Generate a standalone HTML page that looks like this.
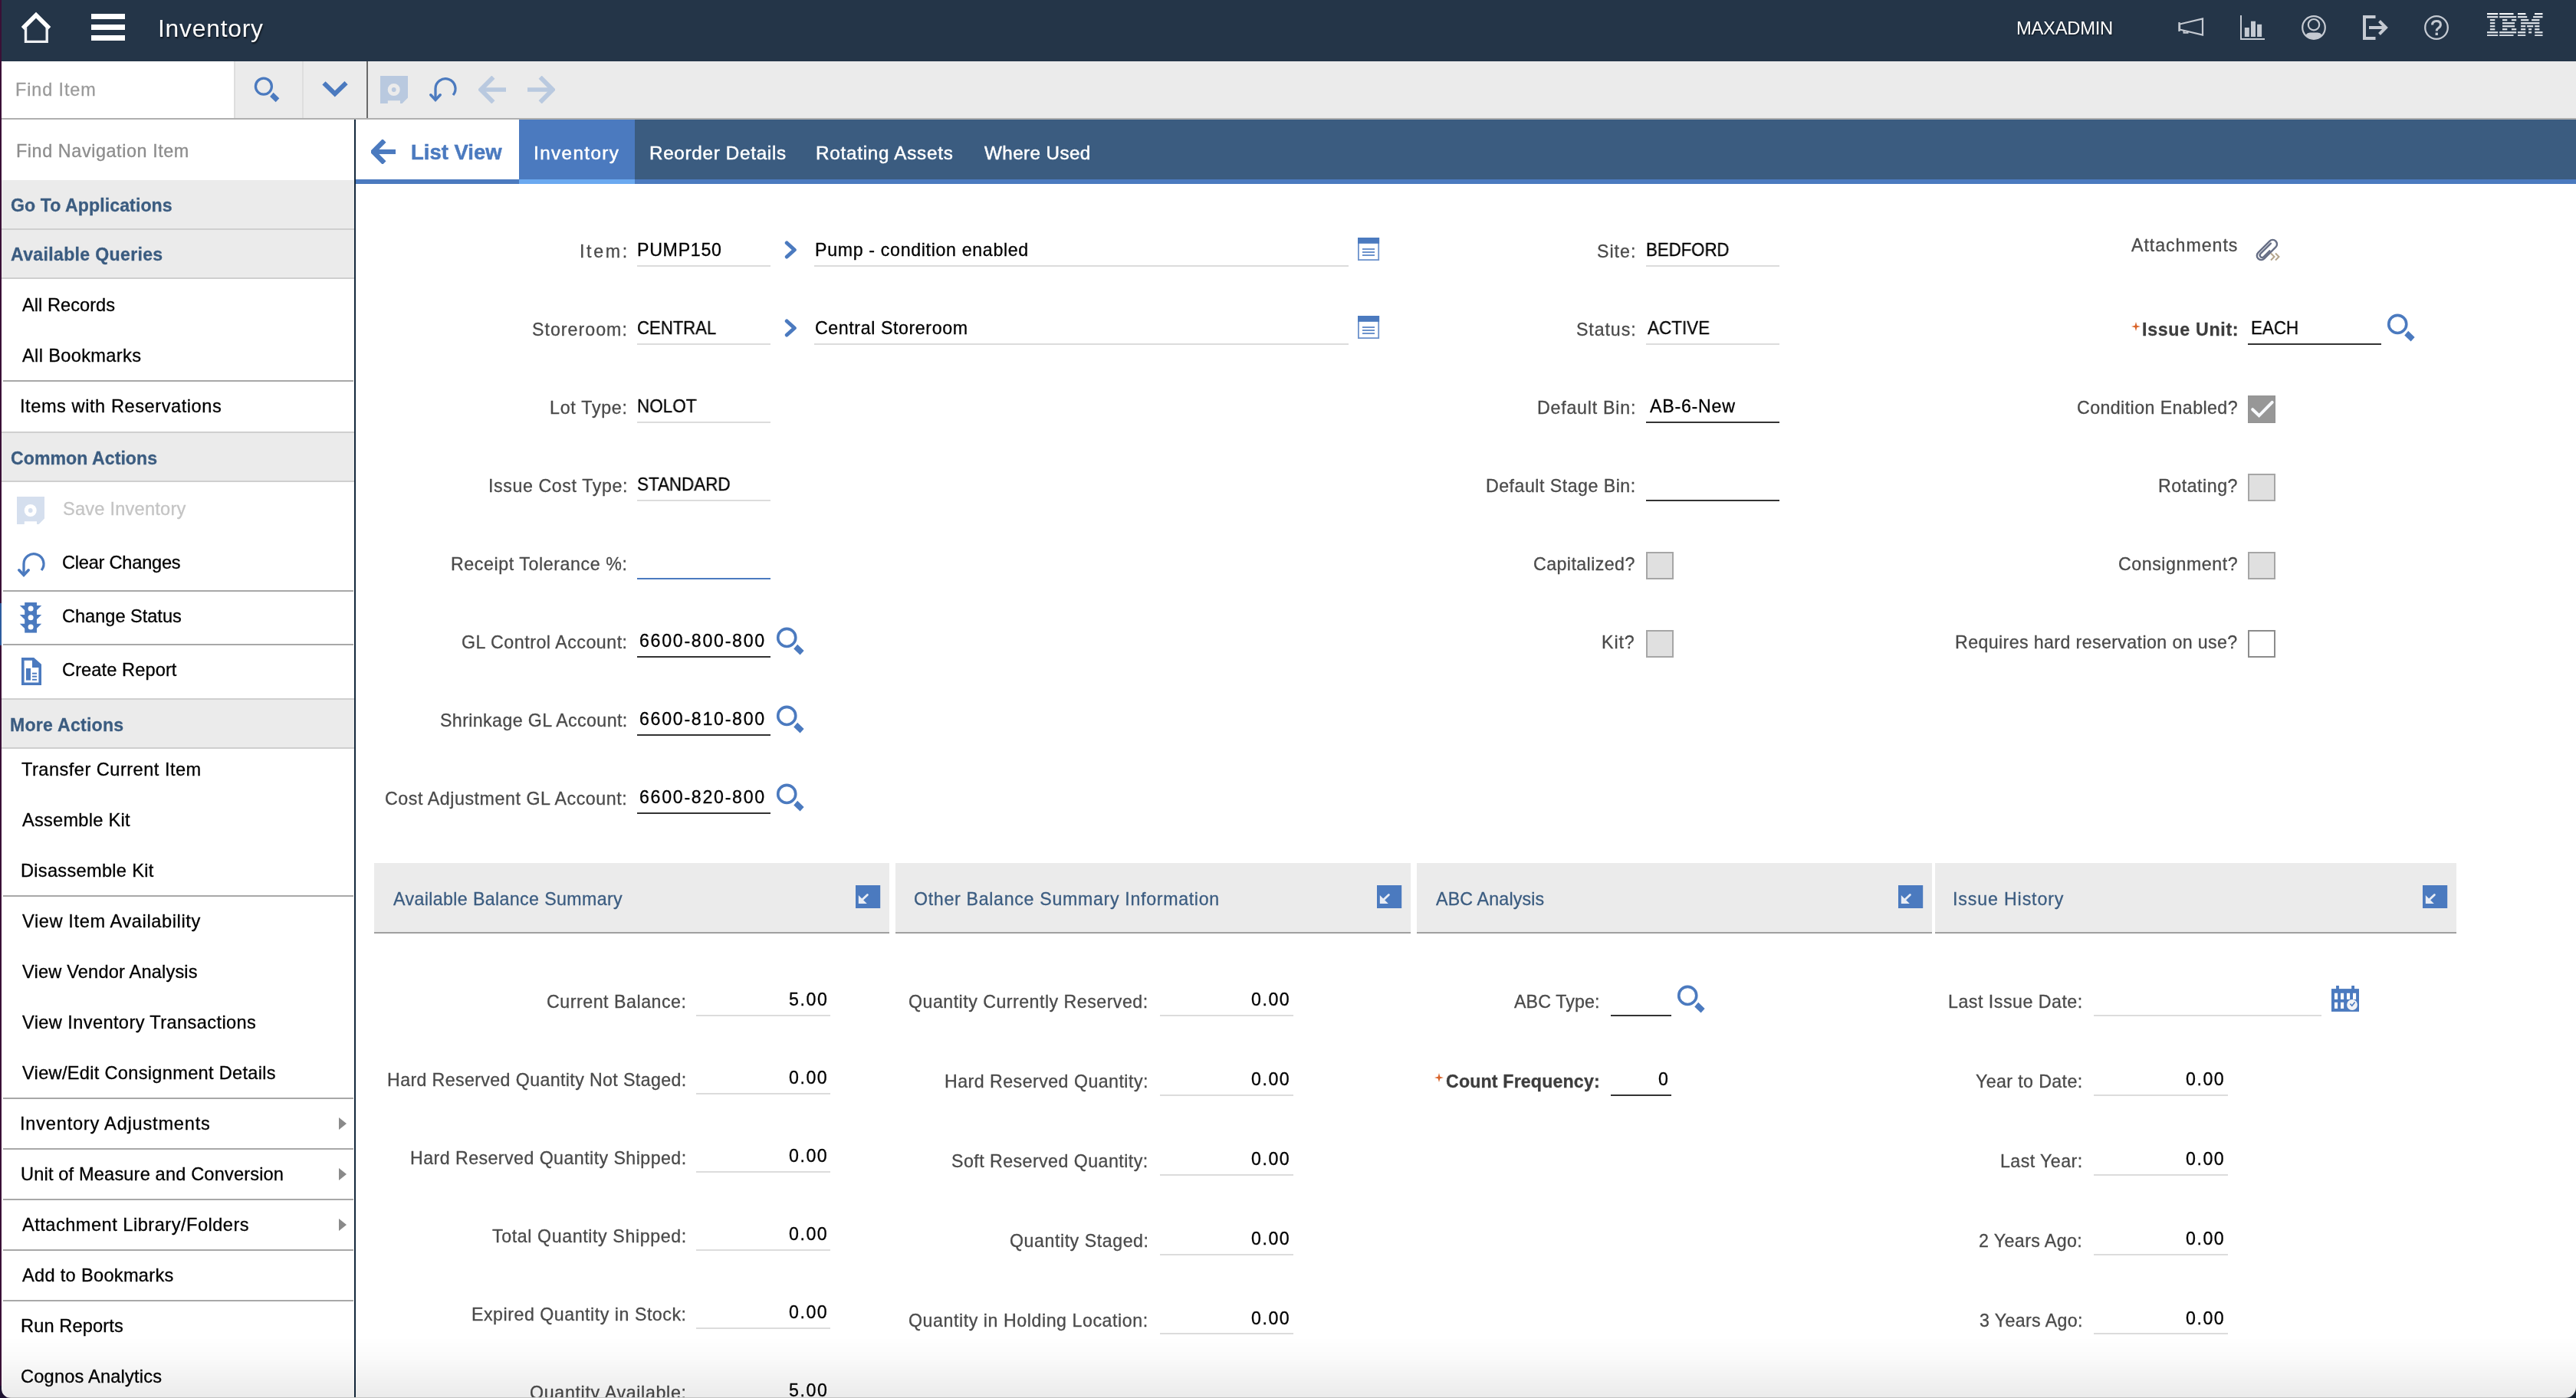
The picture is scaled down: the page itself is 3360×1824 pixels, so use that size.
<!DOCTYPE html>
<html><head><meta charset="utf-8"><title>Inventory</title>
<style>
html,body{margin:0;padding:0;background:#fff;}
body{width:3360px;height:1824px;position:relative;overflow:hidden;font-family:"Liberation Sans",sans-serif;}
#p{position:absolute;left:0;top:0;width:3360px;height:1824px;overflow:hidden;}
#p>div,#p>svg,#p>span{position:absolute;display:block;}
.t{line-height:1;white-space:nowrap;will-change:transform;-webkit-text-stroke-width:.3px;}
</style></head><body><div id="p">
<div style="left:0px;top:0px;width:3360px;height:1824px;background:#fff;"></div>
<div style="left:0px;top:0px;width:2px;height:1824px;background:#3a1036;"></div>
<div style="left:0px;top:787px;width:2px;height:55px;background:#2d5c9e;"></div>
<div style="left:2px;top:0px;width:3358px;height:80px;background:#243548;"></div>
<div style="left:2px;top:80px;width:3358px;height:74px;background:#ebebeb;"></div>
<div style="left:2px;top:154px;width:3358px;height:2px;background:#afafaf;"></div>
<div style="left:2px;top:80px;width:304px;height:74px;background:#fff;"></div>
<div style="left:305px;top:80px;width:2px;height:74px;background:#dedede;"></div>
<div style="left:394px;top:80px;width:2px;height:74px;background:#dedede;"></div>
<div style="left:478px;top:80px;width:2px;height:74px;background:#6a6a6a;"></div>
<svg style="left:28px;top:14px" width="40" height="44" viewBox="0 0 40 44"><path d="M3.66 21 L19 5.76 L34.34 21" fill="none" stroke="#fff" stroke-width="5.6" stroke-linecap="square" stroke-linejoin="miter"/><path d="M5.5 22 V40.4 H33.2 V22" fill="none" stroke="#eef0f3" stroke-width="3.4"/></svg>
<div style="left:119px;top:17.5px;width:44px;height:7px;background:#fff;"></div>
<div style="left:119px;top:31.5px;width:44px;height:7px;background:#fff;"></div>
<div style="left:119px;top:45.5px;width:44px;height:7px;background:#fff;"></div>
<span class="t " style="top:22px;font-size:31.8px;color:#fff;letter-spacing:0.774px;left:206.07px;-webkit-text-stroke-width:0;text-shadow:1px 2px 2px rgba(0,0,0,.6);">Inventory</span>
<span class="t " style="top:25px;font-size:23.8px;color:#fff;letter-spacing:-0.297px;left:2630.05px;-webkit-text-stroke-width:0;text-shadow:1px 1px 2px rgba(0,0,0,.6);">MAXADMIN</span>
<svg style="left:2840px;top:20px" width="36" height="32" viewBox="0 0 36 32"><path d="M33 4.5 V25.5 L3 18.5 V11.5 Z" fill="none" stroke="#c5cad2" stroke-width="2.2" stroke-linejoin="miter"/><path d="M2.5 9 V21" stroke="#c5cad2" stroke-width="2.4"/><path d="M8.5 19.5 V22.8 H13.5 V20.5" fill="none" stroke="#c5cad2" stroke-width="2"/></svg>
<svg style="left:2921px;top:20px" width="34" height="32" viewBox="0 0 34 32"><path d="M2 0 V31 H33" fill="none" stroke="#c5cad2" stroke-width="2"/><rect x="6.8" y="16" width="6" height="12" fill="#c5cad2"/><rect x="15" y="7.7" width="6" height="20.3" fill="#c5cad2"/><rect x="23.1" y="11.8" width="6" height="16.2" fill="#c5cad2"/></svg>
<svg style="left:3001px;top:19px" width="34" height="34" viewBox="0 0 34 34"><circle cx="17" cy="17" r="14.8" fill="none" stroke="#c5cad2" stroke-width="2.2"/><circle cx="17" cy="13.2" r="7.2" fill="none" stroke="#c5cad2" stroke-width="2.2"/><path d="M6.4 26.6 Q8.6 23.6 12 23.6 H22 Q25.4 23.6 27.6 26.6 A14.2 14.2 0 0 1 6.4 26.6 Z" fill="#c5cad2"/></svg>
<svg style="left:3081px;top:20px" width="34" height="32" viewBox="0 0 34 32"><path d="M17.5 2 H3 V30 H17.5" fill="none" stroke="#c5cad2" stroke-width="4"/><path d="M9 16 H30" stroke="#c5cad2" stroke-width="4"/><path d="M22.5 7.5 L31 16 L22.5 24.5" fill="none" stroke="#c5cad2" stroke-width="4" stroke-linejoin="miter"/></svg>
<svg style="left:3161px;top:19px" width="34" height="34" viewBox="0 0 34 34"><circle cx="17" cy="17" r="14.8" fill="none" stroke="#c5cad2" stroke-width="2.3"/><path d="M11.6 13.6 Q11.6 8.6 17 8.6 Q22.4 8.6 22.4 13 Q22.4 15.8 19.6 17.6 Q17.2 19.2 17.2 21.6" fill="none" stroke="#c5cad2" stroke-width="3"/><rect x="15.6" y="23.6" width="3.3" height="3.4" fill="#c5cad2"/></svg>
<svg style="left:3244px;top:17px" width="73" height="30" viewBox="0 0 73 30"><rect x="0" y="0.00" width="14.2" height="2.2" fill="#f4f6f8"/><rect x="16.1" y="0.00" width="18.4" height="2.2" fill="#f4f6f8"/><rect x="40" y="0.00" width="10.4" height="2.2" fill="#f4f6f8"/><rect x="62" y="0.00" width="10.5" height="2.2" fill="#f4f6f8"/><rect x="0" y="4.03" width="14.2" height="2.2" fill="#dfe3e8"/><rect x="16.1" y="4.03" width="22.1" height="2.2" fill="#dfe3e8"/><rect x="40" y="4.03" width="12.2" height="2.2" fill="#dfe3e8"/><rect x="60.1" y="4.03" width="12.4" height="2.2" fill="#dfe3e8"/><rect x="3.9" y="8.06" width="6.4" height="2.2" fill="#dfe3e8"/><rect x="20" y="8.06" width="6.3" height="2.2" fill="#dfe3e8"/><rect x="31.9" y="8.06" width="6.3" height="2.2" fill="#dfe3e8"/><rect x="44.1" y="8.06" width="10.2" height="2.2" fill="#dfe3e8"/><rect x="58.1" y="8.06" width="10.3" height="2.2" fill="#dfe3e8"/><rect x="3.9" y="12.09" width="6.4" height="2.2" fill="#dfe3e8"/><rect x="20" y="12.09" width="16.1" height="2.2" fill="#dfe3e8"/><rect x="44.1" y="12.09" width="24.3" height="2.2" fill="#dfe3e8"/><rect x="3.9" y="16.12" width="6.4" height="2.2" fill="#dfe3e8"/><rect x="20" y="16.12" width="16.1" height="2.2" fill="#dfe3e8"/><rect x="44.1" y="16.12" width="6.1" height="2.2" fill="#dfe3e8"/><rect x="52.1" y="16.12" width="8.1" height="2.2" fill="#dfe3e8"/><rect x="62.2" y="16.12" width="6.2" height="2.2" fill="#dfe3e8"/><rect x="3.9" y="20.15" width="6.4" height="2.2" fill="#dfe3e8"/><rect x="20" y="20.15" width="6.3" height="2.2" fill="#dfe3e8"/><rect x="31.9" y="20.15" width="6.3" height="2.2" fill="#dfe3e8"/><rect x="44.1" y="20.15" width="6.1" height="2.2" fill="#dfe3e8"/><rect x="54.1" y="20.15" width="4.0" height="2.2" fill="#dfe3e8"/><rect x="62.2" y="20.15" width="6.2" height="2.2" fill="#dfe3e8"/><rect x="0" y="24.18" width="14.2" height="2.2" fill="#dfe3e8"/><rect x="16.1" y="24.18" width="22.1" height="2.2" fill="#dfe3e8"/><rect x="40" y="24.18" width="10.2" height="2.2" fill="#dfe3e8"/><rect x="54.1" y="24.18" width="4.0" height="2.2" fill="#dfe3e8"/><rect x="62.2" y="24.18" width="10.3" height="2.2" fill="#dfe3e8"/><rect x="0" y="28.21" width="14.2" height="2.2" fill="#dfe3e8"/><rect x="16.1" y="28.21" width="18.4" height="2.2" fill="#dfe3e8"/><rect x="40" y="28.21" width="10.2" height="2.2" fill="#dfe3e8"/><rect x="62.2" y="28.21" width="10.3" height="2.2" fill="#dfe3e8"/></svg>
<span class="t " style="top:106px;font-size:23.4px;color:#9a9a9a;letter-spacing:0.901px;left:20.38px;">Find Item</span>
<svg style="left:330px;top:100px" width="36" height="36" viewBox="0 0 36 36"><circle cx="13.9" cy="12.7" r="10.5" fill="none" stroke="#4b7abf" stroke-width="3.3"/><path d="M26.6 20.7 L34.3 28.2 L29.7 33.2 L22.1 25.9 Z" fill="#4b7abf"/></svg>
<svg style="left:420px;top:106px" width="34" height="22" viewBox="0 0 34 22"><path d="M4.6 4.5 L16.8 16.3 L29.4 4.2" fill="none" stroke="#4b7abf" stroke-width="6" stroke-linecap="square" stroke-linejoin="miter"/></svg>
<svg style="left:496px;top:99px" width="36" height="36" viewBox="0 0 36 36"><path d="M0 0 H36 V28.6 L28.6 36 H26 V32.3 H9.8 V36 H0 Z" fill="#b9c9df"/><circle cx="17.7" cy="18" r="8" fill="#ebebeb"/><circle cx="17.7" cy="18" r="2.9" fill="#b9c9df"/></svg>
<svg style="left:558px;top:99px" width="40" height="36" viewBox="0 0 40 36"><path d="M10 30 V16.7 A13 13 0 1 1 33 25" fill="none" stroke="#4b7abf" stroke-width="3.3"/><path d="M3.8 24.8 L10 31.4 L16.2 24.8" fill="none" stroke="#4b7abf" stroke-width="3.6" stroke-linecap="round" stroke-linejoin="miter"/></svg>
<svg style="left:624px;top:99px" width="36" height="36" viewBox="0 0 36 36"><g transform="scale(1.0)"><path d="M3 18 H36" stroke="#b9c9df" stroke-width="5.5"/><path d="M19.4 1.6 L3.2 18 L19.4 34.4" fill="none" stroke="#b9c9df" stroke-width="5.8" stroke-linecap="butt" stroke-linejoin="miter"/></g></svg>
<svg style="left:688px;top:99px" width="36" height="36" viewBox="0 0 36 36"><path d="M0 18 H33" stroke="#b9c9df" stroke-width="5.5"/><path d="M16.6 1.6 L32.8 18 L16.6 34.4" fill="none" stroke="#b9c9df" stroke-width="5.8" stroke-linecap="butt" stroke-linejoin="miter"/></svg>
<div style="left:464px;top:156px;width:2896px;height:78px;background:#3b5c80;"></div>
<div style="left:464px;top:234px;width:2896px;height:6px;background:#4b7abf;"></div>
<div style="left:464px;top:156px;width:213px;height:78px;background:#fff;"></div>
<div style="left:677px;top:156px;width:151px;height:78px;background:#4b7abf;"></div>
<div style="left:677px;top:234px;width:151px;height:6px;background:#6aa9f0;"></div>
<svg style="left:484px;top:181.6px" width="32" height="32" viewBox="0 0 32 32"><g transform="scale(0.8888888888888888)"><path d="M3 18 H36" stroke="#4b7abf" stroke-width="6.9"/><path d="M19.4 1.6 L3.2 18 L19.4 34.4" fill="none" stroke="#4b7abf" stroke-width="7.2" stroke-linecap="butt" stroke-linejoin="miter"/></g></svg>
<span class="t " style="top:185px;font-size:27.4px;color:#4b7abf;font-weight:bold;letter-spacing:0.033px;left:535.79px;-webkit-text-stroke:.5px #4b7abf;">List View</span>
<span class="t " style="top:188px;font-size:24.2px;color:#fff;letter-spacing:1.430px;left:695.67px;-webkit-text-stroke:.5px #fff;">Inventory</span>
<span class="t " style="top:188px;font-size:24.2px;color:#fff;letter-spacing:0.717px;left:846.92px;-webkit-text-stroke:.5px #fff;">Reorder Details</span>
<span class="t " style="top:188px;font-size:24.2px;color:#fff;letter-spacing:0.765px;left:1064.32px;-webkit-text-stroke:.5px #fff;">Rotating Assets</span>
<span class="t " style="top:188px;font-size:24.2px;color:#fff;letter-spacing:0.430px;left:1284.10px;-webkit-text-stroke:.5px #fff;">Where Used</span>
<div style="left:462px;top:156px;width:2px;height:1668px;background:#14283c;"></div>
<span class="t " style="top:186px;font-size:23.4px;color:#8c8c8c;letter-spacing:0.570px;left:21.48px;">Find Navigation Item</span>
<div style="left:2px;top:235px;width:460px;height:2px;background:#ebebeb;"></div>
<div style="left:2px;top:236px;width:460px;height:63px;background:#ebebeb;"></div>
<div style="left:2px;top:298px;width:460px;height:2px;background:#cfcfcf;"></div>
<span class="t " style="top:257px;font-size:23.1px;color:#3b5c80;font-weight:bold;letter-spacing:0.088px;left:13.65px;">Go To Applications</span>
<div style="left:2px;top:300px;width:460px;height:63px;background:#ebebeb;"></div>
<div style="left:2px;top:362px;width:460px;height:2px;background:#cfcfcf;"></div>
<span class="t " style="top:321px;font-size:23.1px;color:#3b5c80;font-weight:bold;letter-spacing:0.328px;left:14.05px;">Available Queries</span>
<span class="t " style="top:387px;font-size:23.6px;color:#000;letter-spacing:0.043px;left:28.55px;">All Records</span>
<span class="t " style="top:453px;font-size:23.6px;color:#000;letter-spacing:0.347px;left:28.55px;">All Bookmarks</span>
<div style="left:4px;top:496px;width:457px;height:2px;background:#a8a8a8;"></div>
<span class="t " style="top:519px;font-size:23.6px;color:#000;letter-spacing:0.559px;left:26.43px;">Items with Reservations</span>
<div style="left:2px;top:563px;width:460px;height:2px;background:#cfcfcf;"></div>
<div style="left:2px;top:565px;width:460px;height:63px;background:#ebebeb;"></div>
<div style="left:2px;top:627px;width:460px;height:2px;background:#cfcfcf;"></div>
<span class="t " style="top:587px;font-size:23.1px;color:#3b5c80;font-weight:bold;letter-spacing:0.054px;left:13.65px;">Common Actions</span>
<svg style="left:22px;top:648px" width="36" height="36" viewBox="0 0 36 36"><path d="M0 0 H36 V28.6 L28.6 36 H26 V32.3 H9.8 V36 H0 Z" fill="#d5dfee"/><circle cx="17.7" cy="18" r="8" fill="#fff"/><circle cx="17.7" cy="18" r="2.9" fill="#d5dfee"/></svg>
<span class="t " style="top:653px;font-size:23.6px;color:#c4c4c4;letter-spacing:0.223px;left:81.54px;">Save Inventory</span>
<svg style="left:20.5px;top:718.5px" width="40" height="36" viewBox="0 0 40 36"><path d="M10 30 V16.7 A13 13 0 1 1 33 25" fill="none" stroke="#4b7abf" stroke-width="3.3"/><path d="M3.8 24.8 L10 31.4 L16.2 24.8" fill="none" stroke="#4b7abf" stroke-width="3.6" stroke-linecap="round" stroke-linejoin="miter"/></svg>
<span class="t " style="top:723px;font-size:23.6px;color:#000;letter-spacing:-0.232px;left:81.42px;">Clear Changes</span>
<div style="left:4px;top:770px;width:457px;height:2px;background:#a8a8a8;"></div>
<svg style="left:25px;top:785px" width="30" height="42" viewBox="0 0 30 42"><rect x="7.2" y="1" width="15.8" height="39.6" fill="#4b7abf"/><path d="M0.8 5 H8 V12 Z" fill="#4b7abf"/><path d="M29.2 5 H22 V12 Z" fill="#4b7abf"/><path d="M0.8 17 H8 V24 Z" fill="#4b7abf"/><path d="M29.2 17 H22 V24 Z" fill="#4b7abf"/><path d="M0.8 28.8 H8 V35.8 Z" fill="#4b7abf"/><path d="M29.2 28.8 H22 V35.8 Z" fill="#4b7abf"/><circle cx="15.1" cy="9" r="3.5" fill="#fff"/><circle cx="15.1" cy="20.8" r="3.5" fill="#fff"/><circle cx="15.1" cy="32.9" r="3.5" fill="#fff"/></svg>
<span class="t " style="top:793px;font-size:23.6px;color:#000;letter-spacing:-0.026px;left:81.42px;">Change Status</span>
<div style="left:4px;top:840px;width:457px;height:2px;background:#a8a8a8;"></div>
<svg style="left:27px;top:857px" width="28" height="38" viewBox="0 0 28 38"><path d="M2.8 2.9 H16.5 L25.2 10.5 V35.2 H2.8 Z" fill="none" stroke="#4b7abf" stroke-width="3.6" stroke-linejoin="miter"/><path d="M15 2 L26 11.5 V14 H15 Z" fill="#4b7abf"/><rect x="7" y="15" width="6" height="15.6" fill="#4b7abf"/><rect x="15" y="20.7" width="6" height="1.9" fill="#4b7abf"/><rect x="15" y="24.7" width="6" height="1.9" fill="#4b7abf"/><rect x="15" y="28.8" width="6" height="1.9" fill="#4b7abf"/></svg>
<span class="t " style="top:863px;font-size:23.6px;color:#000;letter-spacing:0.101px;left:81.42px;">Create Report</span>
<div style="left:2px;top:911px;width:460px;height:2px;background:#cfcfcf;"></div>
<div style="left:2px;top:913px;width:460px;height:63px;background:#ebebeb;"></div>
<div style="left:2px;top:975px;width:460px;height:2px;background:#cfcfcf;"></div>
<span class="t " style="top:935px;font-size:23.1px;color:#3b5c80;font-weight:bold;letter-spacing:0.244px;left:13.08px;">More Actions</span>
<span class="t " style="top:993px;font-size:23.6px;color:#000;letter-spacing:0.478px;left:28.08px;">Transfer Current Item</span>
<span class="t " style="top:1059px;font-size:23.6px;color:#000;letter-spacing:0.253px;left:28.55px;">Assemble Kit</span>
<span class="t " style="top:1125px;font-size:23.6px;color:#000;letter-spacing:0.294px;left:26.66px;">Disassemble Kit</span>
<div style="left:4px;top:1168px;width:457px;height:2px;background:#a8a8a8;"></div>
<span class="t " style="top:1191px;font-size:23.6px;color:#000;letter-spacing:0.611px;left:28.51px;">View Item Availability</span>
<span class="t " style="top:1257px;font-size:23.6px;color:#000;letter-spacing:0.180px;left:28.51px;">View Vendor Analysis</span>
<span class="t " style="top:1323px;font-size:23.6px;color:#000;letter-spacing:0.393px;left:28.51px;">View Inventory Transactions</span>
<span class="t " style="top:1389px;font-size:23.6px;color:#000;letter-spacing:0.303px;left:28.51px;">View/Edit Consignment Details</span>
<div style="left:4px;top:1432px;width:457px;height:2px;background:#a8a8a8;"></div>
<span class="t " style="top:1455px;font-size:23.6px;color:#000;letter-spacing:0.782px;left:26.43px;">Inventory Adjustments</span>
<svg style="left:441px;top:1457px" width="12" height="18" viewBox="0 0 12 18"><path d="M1 1 L11 9 L1 17 Z" fill="#8a8a8a"/></svg>
<div style="left:4px;top:1498px;width:457px;height:2px;background:#a8a8a8;"></div>
<span class="t " style="top:1521px;font-size:23.6px;color:#000;letter-spacing:0.158px;left:26.78px;">Unit of Measure and Conversion</span>
<svg style="left:441px;top:1523px" width="12" height="18" viewBox="0 0 12 18"><path d="M1 1 L11 9 L1 17 Z" fill="#8a8a8a"/></svg>
<div style="left:4px;top:1564px;width:457px;height:2px;background:#a8a8a8;"></div>
<span class="t " style="top:1587px;font-size:23.6px;color:#000;letter-spacing:0.495px;left:28.55px;">Attachment Library/Folders</span>
<svg style="left:441px;top:1589px" width="12" height="18" viewBox="0 0 12 18"><path d="M1 1 L11 9 L1 17 Z" fill="#8a8a8a"/></svg>
<div style="left:4px;top:1630px;width:457px;height:2px;background:#a8a8a8;"></div>
<span class="t " style="top:1653px;font-size:23.6px;color:#000;letter-spacing:0.306px;left:28.55px;">Add to Bookmarks</span>
<div style="left:4px;top:1696px;width:457px;height:2px;background:#a8a8a8;"></div>
<span class="t " style="top:1719px;font-size:23.6px;color:#000;letter-spacing:0.129px;left:26.66px;">Run Reports</span>
<span class="t " style="top:1785px;font-size:23.6px;color:#000;letter-spacing:0.200px;left:27.42px;">Cognos Analytics</span>
<span class="t " style="top:317px;font-size:23.2px;color:#4a4a4a;letter-spacing:2.668px;right:2539.23px;">Item:</span>
<span class="t " style="top:419px;font-size:23.2px;color:#4a4a4a;letter-spacing:1.021px;right:2540.88px;">Storeroom:</span>
<span class="t " style="top:521px;font-size:23.2px;color:#4a4a4a;letter-spacing:0.748px;right:2541.15px;">Lot Type:</span>
<span class="t " style="top:623px;font-size:23.2px;color:#4a4a4a;letter-spacing:0.605px;right:2541.29px;">Issue Cost Type:</span>
<span class="t " style="top:725px;font-size:23.2px;color:#4a4a4a;letter-spacing:0.590px;right:2541.29px;">Receipt Tolerance %:</span>
<span class="t " style="top:827px;font-size:23.2px;color:#4a4a4a;letter-spacing:0.523px;right:2541.36px;">GL Control Account:</span>
<span class="t " style="top:929px;font-size:23.2px;color:#4a4a4a;letter-spacing:0.395px;right:2541.51px;">Shrinkage GL Account:</span>
<span class="t " style="top:1031px;font-size:23.2px;color:#4a4a4a;letter-spacing:0.576px;right:2541.32px;">Cost Adjustment GL Account:</span>
<div style="left:831px;top:346px;width:174px;height:2px;background:#dcdcdc;"></div>
<span class="t " style="top:315px;font-size:23.2px;color:#000;letter-spacing:0.706px;left:830.60px;">PUMP150</span>
<div style="left:831px;top:448px;width:174px;height:2px;background:#dcdcdc;"></div>
<span class="t " style="top:417px;font-size:23.2px;color:#000;left:831.39px;transform:scaleX(0.9544);transform-origin:0 0;">CENTRAL</span>
<div style="left:831px;top:550px;width:174px;height:2px;background:#dcdcdc;"></div>
<span class="t " style="top:519px;font-size:23.2px;color:#000;left:830.66px;transform:scaleX(0.9692);transform-origin:0 0;">NOLOT</span>
<div style="left:831px;top:652px;width:174px;height:2px;background:#dcdcdc;"></div>
<span class="t " style="top:621px;font-size:23.2px;color:#000;left:831.49px;transform:scaleX(0.9665);transform-origin:0 0;">STANDARD</span>
<div style="left:831px;top:754px;width:174px;height:2px;background:#4b7abf;"></div>
<div style="left:831px;top:856px;width:174px;height:2px;background:#333;"></div>
<span class="t " style="top:825px;font-size:23.2px;color:#000;letter-spacing:1.707px;left:833.94px;">6600-800-800</span>
<svg style="left:1010.9px;top:818.1px" width="39.5" height="39.5" viewBox="0 0 36 36"><circle cx="13.9" cy="12.7" r="10.5" fill="none" stroke="#4b7abf" stroke-width="3.3"/><path d="M26.6 20.7 L34.3 28.2 L29.7 33.2 L22.1 25.9 Z" fill="#4b7abf"/></svg>
<div style="left:831px;top:958px;width:174px;height:2px;background:#333;"></div>
<span class="t " style="top:927px;font-size:23.2px;color:#000;letter-spacing:1.707px;left:833.94px;">6600-810-800</span>
<svg style="left:1010.9px;top:920.1px" width="39.5" height="39.5" viewBox="0 0 36 36"><circle cx="13.9" cy="12.7" r="10.5" fill="none" stroke="#4b7abf" stroke-width="3.3"/><path d="M26.6 20.7 L34.3 28.2 L29.7 33.2 L22.1 25.9 Z" fill="#4b7abf"/></svg>
<div style="left:831px;top:1060px;width:174px;height:2px;background:#333;"></div>
<span class="t " style="top:1029px;font-size:23.2px;color:#000;letter-spacing:1.707px;left:833.94px;">6600-820-800</span>
<svg style="left:1010.9px;top:1022.1px" width="39.5" height="39.5" viewBox="0 0 36 36"><circle cx="13.9" cy="12.7" r="10.5" fill="none" stroke="#4b7abf" stroke-width="3.3"/><path d="M26.6 20.7 L34.3 28.2 L29.7 33.2 L22.1 25.9 Z" fill="#4b7abf"/></svg>
<svg style="left:1021px;top:311px" width="18" height="30" viewBox="0 0 18 30"><path d="M5.3 6 L15.3 15 L5.3 24" fill="none" stroke="#4b7abf" stroke-width="5" stroke-linecap="round" stroke-linejoin="round"/></svg>
<div style="left:1062px;top:346px;width:697px;height:2px;background:#dcdcdc;"></div>
<span class="t " style="top:315px;font-size:23.2px;color:#000;letter-spacing:0.664px;left:1062.70px;">Pump - condition enabled</span>
<svg style="left:1771px;top:310px" width="29" height="31" viewBox="0 0 29 31"><rect x="0.9" y="0.9" width="26.3" height="28.2" fill="#fff" stroke="#6d93cc" stroke-width="1.8"/><rect x="0" y="0" width="28.1" height="7.8" fill="#4b7abf"/><path d="M6 15 H22 M6 19 H22 M6 23 H22" stroke="#6d93cc" stroke-width="2"/></svg>
<svg style="left:1021px;top:413px" width="18" height="30" viewBox="0 0 18 30"><path d="M5.3 6 L15.3 15 L5.3 24" fill="none" stroke="#4b7abf" stroke-width="5" stroke-linecap="round" stroke-linejoin="round"/></svg>
<div style="left:1062px;top:448px;width:697px;height:2px;background:#dcdcdc;"></div>
<span class="t " style="top:417px;font-size:23.2px;color:#000;letter-spacing:0.595px;left:1063.44px;">Central Storeroom</span>
<svg style="left:1771px;top:412px" width="29" height="31" viewBox="0 0 29 31"><rect x="0.9" y="0.9" width="26.3" height="28.2" fill="#fff" stroke="#6d93cc" stroke-width="1.8"/><rect x="0" y="0" width="28.1" height="7.8" fill="#4b7abf"/><path d="M6 15 H22 M6 19 H22 M6 23 H22" stroke="#6d93cc" stroke-width="2"/></svg>
<span class="t " style="top:317px;font-size:23.2px;color:#4a4a4a;letter-spacing:0.983px;right:1225.61px;">Site:</span>
<span class="t " style="top:419px;font-size:23.2px;color:#4a4a4a;letter-spacing:0.906px;right:1225.69px;">Status:</span>
<span class="t " style="top:521px;font-size:23.2px;color:#4a4a4a;letter-spacing:0.770px;right:1225.83px;">Default Bin:</span>
<span class="t " style="top:623px;font-size:23.2px;color:#4a4a4a;letter-spacing:0.488px;right:1226.11px;">Default Stage Bin:</span>
<span class="t " style="top:725px;font-size:23.2px;color:#4a4a4a;letter-spacing:0.430px;right:1227.42px;">Capitalized?</span>
<span class="t " style="top:827px;font-size:23.2px;color:#4a4a4a;letter-spacing:0.921px;right:1226.94px;">Kit?</span>
<div style="left:2147px;top:346px;width:174px;height:2px;background:#dcdcdc;"></div>
<span class="t " style="top:315px;font-size:23.2px;color:#000;left:2147.48px;transform:scaleX(0.9572);transform-origin:0 0;">BEDFORD</span>
<div style="left:2147px;top:448px;width:174px;height:2px;background:#dcdcdc;"></div>
<span class="t " style="top:417px;font-size:23.2px;color:#000;left:2149.26px;transform:scaleX(0.9689);transform-origin:0 0;">ACTIVE</span>
<div style="left:2147px;top:550px;width:174px;height:2px;background:#333;"></div>
<span class="t " style="top:519px;font-size:23.2px;color:#000;letter-spacing:0.765px;left:2151.65px;">AB-6-New</span>
<div style="left:2147px;top:652px;width:174px;height:2px;background:#333;"></div>
<div style="left:2147px;top:720px;width:36px;height:36px;background:#e0e0e0;box-sizing:border-box;border:2px solid #a6a6a6;"></div>
<div style="left:2147px;top:822px;width:36px;height:36px;background:#e0e0e0;box-sizing:border-box;border:2px solid #a6a6a6;"></div>
<span class="t " style="top:309px;font-size:23.2px;color:#4a4a4a;letter-spacing:0.954px;right:440.81px;">Attachments</span>
<svg style="left:2940px;top:310px" width="36" height="32" viewBox="0 0 36 32"><g transform="translate(16.9,16) rotate(45)" fill="none" stroke="#666e85" stroke-width="2.4" stroke-linecap="round"><path d="M-5.6 10.6 V-10.6 A5.6 5.6 0 0 1 5.6 -10.6 V10.6 A5.6 5.6 0 0 1 -5.6 10.6 Z"/><path d="M-2.4 -9.5 V9.4 A2.9 2.9 0 0 0 3.4 9.4 V-1.5"/></g><path d="M22 20.5 L26.5 25 L22 29.5 M28 20.5 L32.5 25 L28 29.5" fill="none" stroke="#b3a48b" stroke-width="2"/></svg>
<span class="t " style="top:419px;font-size:23.2px;color:#3d3d3d;font-weight:bold;letter-spacing:0.706px;right:439.67px;">Issue Unit:</span>
<svg style="left:2779.5px;top:419.8px" width="12" height="12" viewBox="0 0 12 12"><path d="M6 0 L7.3 4.7 L12 6 L7.3 7.3 L6 12 L4.7 7.3 L0 6 L4.7 4.7 Z" fill="#d9642a"/></svg>
<div style="left:2932px;top:448px;width:174px;height:2px;background:#333;"></div>
<span class="t " style="top:417px;font-size:23.2px;color:#000;left:2935.57px;transform:scaleX(0.9626);transform-origin:0 0;">EACH</span>
<svg style="left:3111.8px;top:409px" width="39.5" height="39.5" viewBox="0 0 36 36"><circle cx="13.9" cy="12.7" r="10.5" fill="none" stroke="#4b7abf" stroke-width="3.3"/><path d="M26.6 20.7 L34.3 28.2 L29.7 33.2 L22.1 25.9 Z" fill="#4b7abf"/></svg>
<span class="t " style="top:521px;font-size:23.2px;color:#4a4a4a;letter-spacing:0.422px;right:441.34px;">Condition Enabled?</span>
<span class="t " style="top:623px;font-size:23.2px;color:#4a4a4a;letter-spacing:0.527px;right:441.24px;">Rotating?</span>
<span class="t " style="top:725px;font-size:23.2px;color:#4a4a4a;letter-spacing:0.555px;right:441.20px;">Consignment?</span>
<span class="t " style="top:827px;font-size:23.2px;color:#4a4a4a;letter-spacing:0.391px;right:441.37px;">Requires hard reservation on use?</span>
<div style="left:2932px;top:516px;width:36px;height:36px;background:#979797;box-sizing:border-box;border:1px solid #929292;"></div>
<svg style="left:2932px;top:516px" width="36" height="36" viewBox="0 0 36 36"><path d="M6.2 18.2 L14.6 26.3 L31.7 8.9" fill="none" stroke="#f8fafd" stroke-width="4" stroke-linecap="round" stroke-linejoin="miter"/></svg>
<div style="left:2932px;top:618px;width:36px;height:36px;background:#e0e0e0;box-sizing:border-box;border:2px solid #a6a6a6;"></div>
<div style="left:2932px;top:720px;width:36px;height:36px;background:#e0e0e0;box-sizing:border-box;border:2px solid #a6a6a6;"></div>
<div style="left:2932px;top:822px;width:36px;height:36px;background:#fff;box-sizing:border-box;border:2px solid #8c8c8c;"></div>
<div style="left:488px;top:1126px;width:672px;height:90px;background:#ebebeb;"></div>
<div style="left:488px;top:1215.5px;width:672px;height:2.5px;background:#a0a0a0;"></div>
<span class="t " style="top:1162px;font-size:23.2px;color:#3b5c80;letter-spacing:0.378px;left:512.65px;">Available Balance Summary</span>
<svg style="left:1115.9px;top:1155px" width="33" height="30" viewBox="0 0 33 30"><rect x="0" y="0" width="32.2" height="30" fill="#4b7abf"/><path d="M3.8 13 V24 H14.8 Z" fill="#e9edf5"/><path d="M8 19.6 L15.4 12.4" stroke="#e9edf5" stroke-width="2.8" stroke-linecap="round"/></svg>
<div style="left:1168px;top:1126px;width:672px;height:90px;background:#ebebeb;"></div>
<div style="left:1168px;top:1215.5px;width:672px;height:2.5px;background:#a0a0a0;"></div>
<span class="t " style="top:1162px;font-size:23.2px;color:#3b5c80;letter-spacing:0.683px;left:1191.61px;">Other Balance Summary Information</span>
<svg style="left:1795.9px;top:1155px" width="33" height="30" viewBox="0 0 33 30"><rect x="0" y="0" width="32.2" height="30" fill="#4b7abf"/><path d="M3.8 13 V24 H14.8 Z" fill="#e9edf5"/><path d="M8 19.6 L15.4 12.4" stroke="#e9edf5" stroke-width="2.8" stroke-linecap="round"/></svg>
<div style="left:1848px;top:1126px;width:672.4000000000001px;height:90px;background:#ebebeb;"></div>
<div style="left:1848px;top:1215.5px;width:672.4000000000001px;height:2.5px;background:#a0a0a0;"></div>
<span class="t " style="top:1162px;font-size:23.2px;color:#3b5c80;letter-spacing:0.185px;left:1872.65px;">ABC Analysis</span>
<svg style="left:2476.3px;top:1155px" width="33" height="30" viewBox="0 0 33 30"><rect x="0" y="0" width="32.2" height="30" fill="#4b7abf"/><path d="M3.8 13 V24 H14.8 Z" fill="#e9edf5"/><path d="M8 19.6 L15.4 12.4" stroke="#e9edf5" stroke-width="2.8" stroke-linecap="round"/></svg>
<div style="left:2524px;top:1126px;width:680px;height:90px;background:#ebebeb;"></div>
<div style="left:2524px;top:1215.5px;width:680px;height:2.5px;background:#a0a0a0;"></div>
<span class="t " style="top:1162px;font-size:23.2px;color:#3b5c80;letter-spacing:0.859px;left:2546.57px;">Issue History</span>
<svg style="left:3159.9px;top:1155px" width="33" height="30" viewBox="0 0 33 30"><rect x="0" y="0" width="32.2" height="30" fill="#4b7abf"/><path d="M3.8 13 V24 H14.8 Z" fill="#e9edf5"/><path d="M8 19.6 L15.4 12.4" stroke="#e9edf5" stroke-width="2.8" stroke-linecap="round"/></svg>
<span class="t " style="top:1296px;font-size:23.2px;color:#4a4a4a;letter-spacing:0.532px;right:2464.36px;">Current Balance:</span>
<div style="left:908px;top:1324px;width:175px;height:2px;background:#dcdcdc;"></div>
<span class="t " style="top:1293px;font-size:23.2px;color:#000;letter-spacing:1.554px;right:2279.76px;">5.00</span>
<span class="t " style="top:1398px;font-size:23.2px;color:#4a4a4a;letter-spacing:0.381px;right:2464.50px;">Hard Reserved Quantity Not Staged:</span>
<div style="left:908px;top:1426px;width:175px;height:2px;background:#dcdcdc;"></div>
<span class="t " style="top:1395px;font-size:23.2px;color:#000;letter-spacing:1.546px;right:2279.77px;">0.00</span>
<span class="t " style="top:1500px;font-size:23.2px;color:#4a4a4a;letter-spacing:0.447px;right:2464.45px;">Hard Reserved Quantity Shipped:</span>
<div style="left:908px;top:1528px;width:175px;height:2px;background:#dcdcdc;"></div>
<span class="t " style="top:1497px;font-size:23.2px;color:#000;letter-spacing:1.546px;right:2279.77px;">0.00</span>
<span class="t " style="top:1602px;font-size:23.2px;color:#4a4a4a;letter-spacing:0.606px;right:2464.29px;">Total Quantity Shipped:</span>
<div style="left:908px;top:1630px;width:175px;height:2px;background:#dcdcdc;"></div>
<span class="t " style="top:1599px;font-size:23.2px;color:#000;letter-spacing:1.546px;right:2279.77px;">0.00</span>
<span class="t " style="top:1704px;font-size:23.2px;color:#4a4a4a;letter-spacing:0.527px;right:2464.38px;">Expired Quantity in Stock:</span>
<div style="left:908px;top:1732px;width:175px;height:2px;background:#dcdcdc;"></div>
<span class="t " style="top:1701px;font-size:23.2px;color:#000;letter-spacing:1.546px;right:2279.77px;">0.00</span>
<span class="t " style="top:1806px;font-size:23.2px;color:#4a4a4a;letter-spacing:0.686px;right:2464.21px;">Quantity Available:</span>
<div style="left:908px;top:1834px;width:175px;height:2px;background:#dcdcdc;"></div>
<span class="t " style="top:1803px;font-size:23.2px;color:#000;letter-spacing:1.554px;right:2279.76px;">5.00</span>
<span class="t " style="top:1296px;font-size:23.2px;color:#4a4a4a;letter-spacing:0.487px;right:1862.00px;">Quantity Currently Reserved:</span>
<div style="left:1513px;top:1324px;width:174px;height:2px;background:#dcdcdc;"></div>
<span class="t " style="top:1293px;font-size:23.2px;color:#000;letter-spacing:1.546px;right:1676.27px;">0.00</span>
<span class="t " style="top:1400px;font-size:23.2px;color:#4a4a4a;letter-spacing:0.464px;right:1862.03px;">Hard Reserved Quantity:</span>
<div style="left:1513px;top:1428px;width:174px;height:2px;background:#dcdcdc;"></div>
<span class="t " style="top:1397px;font-size:23.2px;color:#000;letter-spacing:1.546px;right:1676.27px;">0.00</span>
<span class="t " style="top:1504px;font-size:23.2px;color:#4a4a4a;letter-spacing:0.453px;right:1862.03px;">Soft Reserved Quantity:</span>
<div style="left:1513px;top:1532px;width:174px;height:2px;background:#dcdcdc;"></div>
<span class="t " style="top:1501px;font-size:23.2px;color:#000;letter-spacing:1.546px;right:1676.27px;">0.00</span>
<span class="t " style="top:1608px;font-size:23.2px;color:#4a4a4a;letter-spacing:0.552px;right:1861.93px;">Quantity Staged:</span>
<div style="left:1513px;top:1636px;width:174px;height:2px;background:#dcdcdc;"></div>
<span class="t " style="top:1605px;font-size:23.2px;color:#000;letter-spacing:1.546px;right:1676.27px;">0.00</span>
<span class="t " style="top:1712px;font-size:23.2px;color:#4a4a4a;letter-spacing:0.560px;right:1861.94px;">Quantity in Holding Location:</span>
<div style="left:1513px;top:1739.4px;width:174px;height:2px;background:#dcdcdc;"></div>
<span class="t " style="top:1709px;font-size:23.2px;color:#000;letter-spacing:1.546px;right:1676.27px;">0.00</span>
<span class="t " style="top:1296px;font-size:23.2px;color:#4a4a4a;letter-spacing:0.135px;right:1273.36px;">ABC Type:</span>
<div style="left:2101px;top:1324px;width:79px;height:2px;background:#333;"></div>
<svg style="left:2186.1px;top:1285.4px" width="39.5" height="39.5" viewBox="0 0 36 36"><circle cx="13.9" cy="12.7" r="10.5" fill="none" stroke="#4b7abf" stroke-width="3.3"/><path d="M26.6 20.7 L34.3 28.2 L29.7 33.2 L22.1 25.9 Z" fill="#4b7abf"/></svg>
<span class="t " style="top:1400px;font-size:23.2px;color:#3d3d3d;font-weight:bold;letter-spacing:0.152px;right:1273.23px;">Count Frequency:</span>
<svg style="left:1871px;top:1399.8px" width="12" height="12" viewBox="0 0 12 12"><path d="M6 0 L7.3 4.7 L12 6 L7.3 7.3 L6 12 L4.7 7.3 L0 6 L4.7 4.7 Z" fill="#d9642a"/></svg>
<div style="left:2101px;top:1428px;width:79px;height:2px;background:#333;"></div>
<span class="t " style="top:1397px;font-size:23.2px;color:#000;right:1184.11px;">0</span>
<span class="t " style="top:1296px;font-size:23.2px;color:#4a4a4a;letter-spacing:0.511px;right:643.48px;">Last Issue Date:</span>
<span class="t " style="top:1400px;font-size:23.2px;color:#4a4a4a;letter-spacing:0.388px;right:643.59px;">Year to Date:</span>
<span class="t " style="top:1504px;font-size:23.2px;color:#4a4a4a;letter-spacing:0.447px;right:643.54px;">Last Year:</span>
<span class="t " style="top:1608px;font-size:23.2px;color:#4a4a4a;letter-spacing:0.416px;right:643.57px;">2 Years Ago:</span>
<span class="t " style="top:1712px;font-size:23.2px;color:#4a4a4a;letter-spacing:0.391px;right:643.59px;">3 Years Ago:</span>
<div style="left:2731px;top:1324px;width:297px;height:2px;background:#dcdcdc;"></div>
<svg style="left:3041px;top:1286px" width="38" height="36" viewBox="0 0 38 36"><rect x="0" y="4.1" width="36" height="29.8" fill="#4b7abf"/><rect x="6.1" y="0" width="3.8" height="6" fill="#4b7abf"/><rect x="26.2" y="0" width="3.8" height="6" fill="#4b7abf"/><rect x="4" y="9.8" width="4.1" height="8.1" fill="#fff"/><rect x="12" y="9.8" width="4.1" height="8.1" fill="#fff"/><rect x="20" y="9.8" width="4.1" height="8.1" fill="#fff"/><rect x="28" y="9.8" width="4.1" height="8.1" fill="#fff"/><rect x="4" y="21.8" width="4.1" height="8.1" fill="#fff"/><rect x="12" y="21.8" width="4.1" height="8.1" fill="#fff"/><circle cx="27" cy="25" r="6.9" fill="#f1f3f6"/><path d="M24.4 23.6 L26.8 26.2 L30.6 21.4" fill="none" stroke="#4b7abf" stroke-width="1.6"/></svg>
<div style="left:2731px;top:1428px;width:175px;height:2px;background:#dcdcdc;"></div>
<span class="t " style="top:1397px;font-size:23.2px;color:#000;letter-spacing:1.546px;right:457.37px;">0.00</span>
<div style="left:2731px;top:1532px;width:175px;height:2px;background:#dcdcdc;"></div>
<span class="t " style="top:1501px;font-size:23.2px;color:#000;letter-spacing:1.546px;right:457.37px;">0.00</span>
<div style="left:2731px;top:1636px;width:175px;height:2px;background:#dcdcdc;"></div>
<span class="t " style="top:1605px;font-size:23.2px;color:#000;letter-spacing:1.546px;right:457.37px;">0.00</span>
<div style="left:2731px;top:1739.4px;width:175px;height:2px;background:#dcdcdc;"></div>
<span class="t " style="top:1709px;font-size:23.2px;color:#000;letter-spacing:1.546px;right:457.37px;">0.00</span>
<div style="left:2px;top:1744px;width:3358px;height:80px;background:linear-gradient(to bottom,rgba(0,0,0,0) 0%,rgba(0,0,0,.018) 35%,rgba(0,0,0,.08) 100%);"></div>
<div style="left:2px;top:1823px;width:3358px;height:1px;background:#c4c4c4;"></div>
<svg style="left:0px;top:1808px" width="16" height="16" viewBox="0 0 16 16"><path d="M0 0 H2 V4 A12 12 0 0 0 14 16 H0 Z" fill="#1d1230"/></svg>
<svg style="left:3344px;top:1808px" width="16" height="16" viewBox="0 0 16 16"><path d="M16 2 V16 H2 A14 14 0 0 0 16 2 Z" fill="#1c2733"/></svg>
</div></body></html>
